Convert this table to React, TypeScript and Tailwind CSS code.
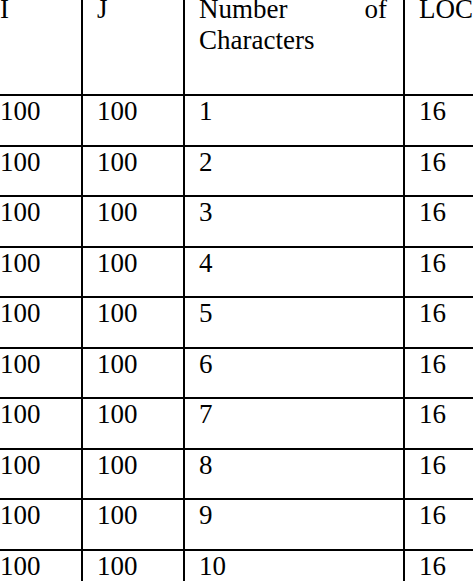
const rows = [1, 2, 3, 4, 5, 6, 7, 8, 9, 10]

const cell = "border-r-2 border-black pl-[14px] pr-[16px]"

export default function App() {
  return (
    <div className="w-[473px] h-[581px] overflow-hidden bg-white">
      <div className="ml-[-14px] mt-[-6px] w-[560px] font-['Liberation_Serif',serif] text-[27px] leading-[31px] text-black">
        <div className="flex h-[102px] border-b-2 border-black">
          <div className={`${cell} w-[97px]`}>I</div>
          <div className={`${cell} w-[102px]`}>J</div>
          <div className={`${cell} w-[220px] text-justify`}>Number of Characters</div>
          <div className="pl-[14px]">LOC</div>
        </div>
        {rows.map((n) => (
          <div key={n} className="flex h-[50.5px] border-b-2 border-black">
            <div className={`${cell} w-[97px]`}>100</div>
            <div className={`${cell} w-[102px]`}>100</div>
            <div className={`${cell} w-[220px]`}>{n}</div>
            <div className="pl-[14px]">16</div>
          </div>
        ))}
      </div>
    </div>
  )
}
